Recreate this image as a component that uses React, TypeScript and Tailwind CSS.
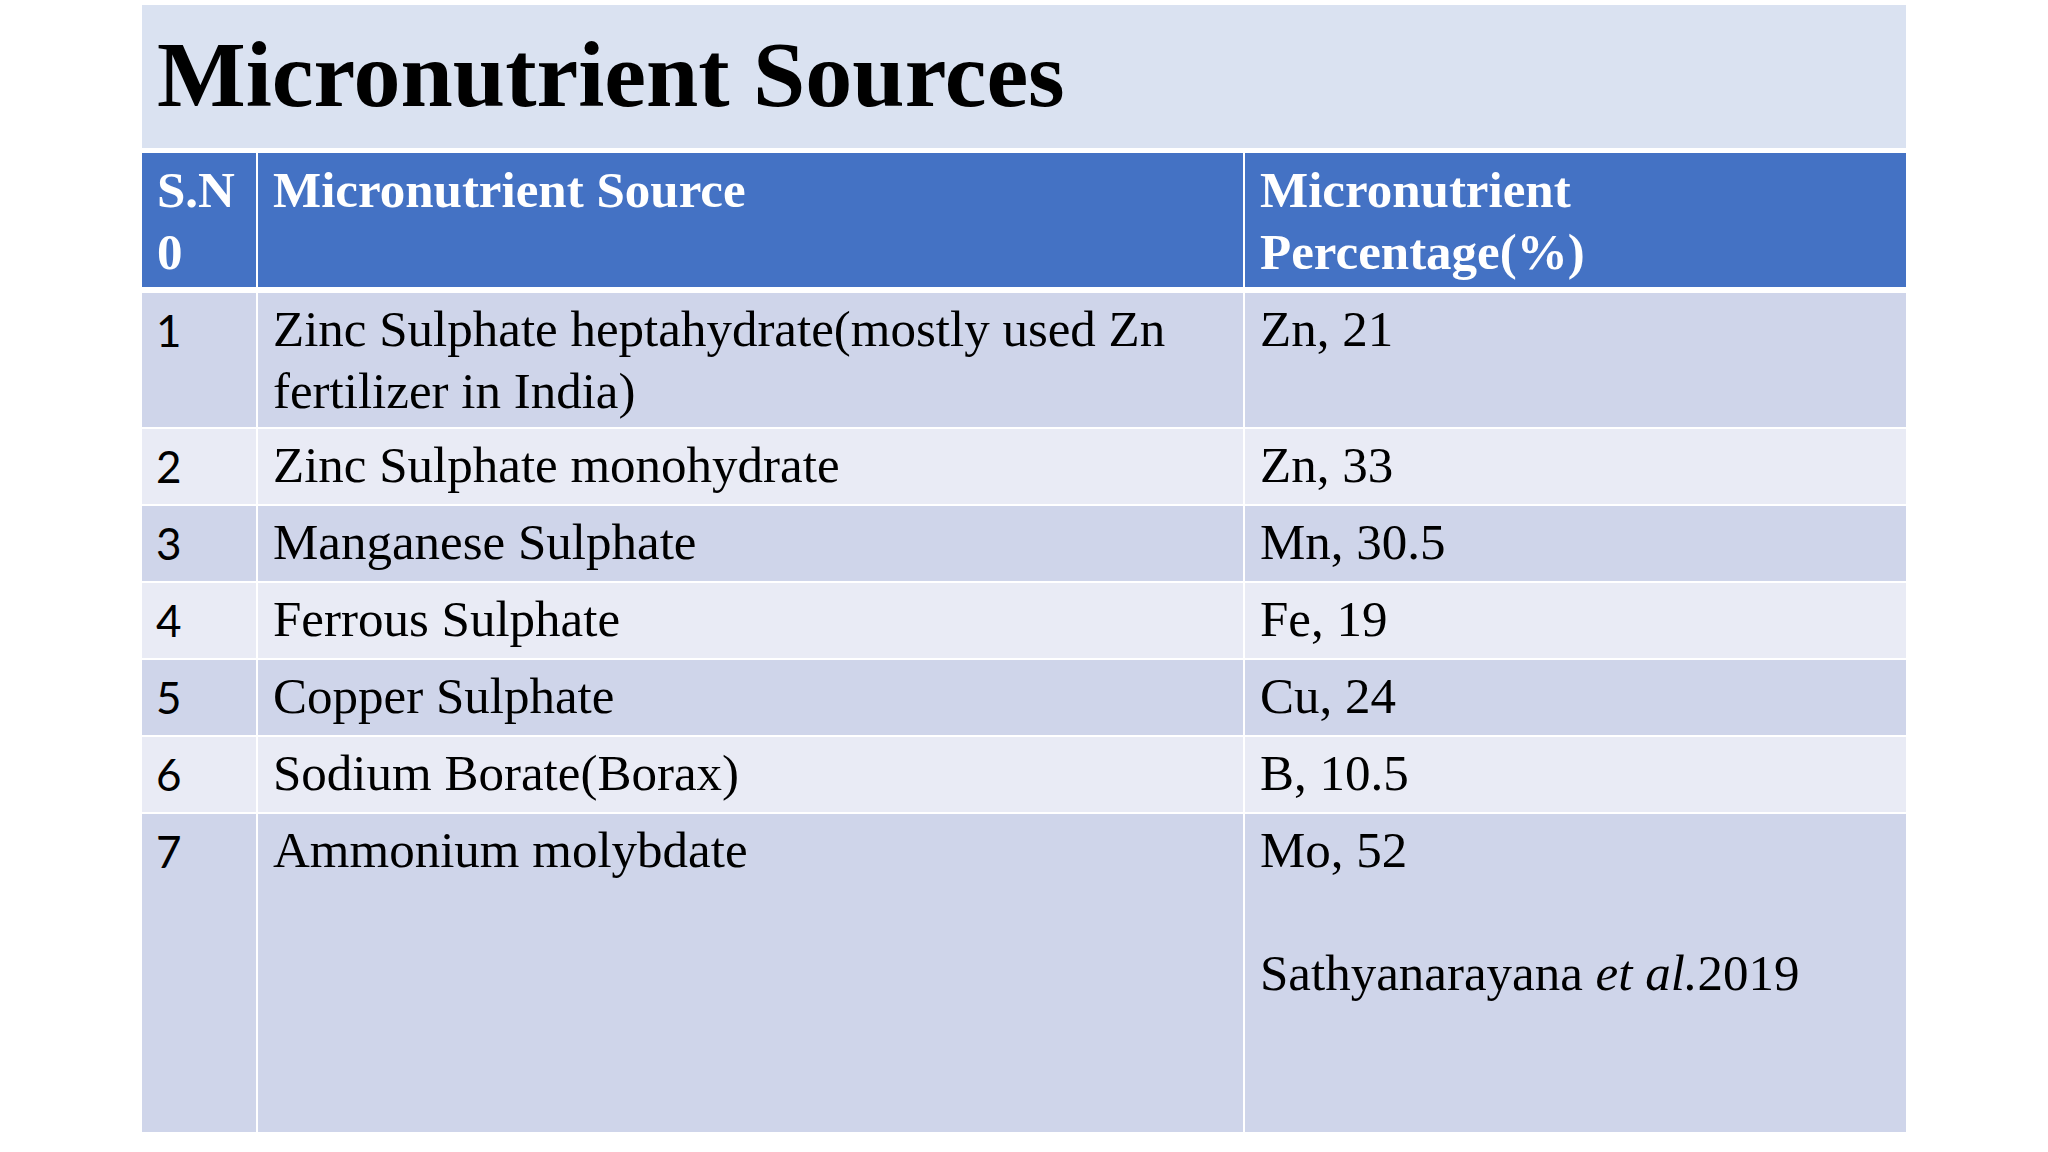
type Row = {
  no: string;
  source: React.ReactNode;
  percent: React.ReactNode;
  h: string;
  dark: boolean;
};

const rows: Row[] = [
  {
    no: "1",
    source: (
      <>
        Zinc Sulphate heptahydrate(mostly used Zn
        <br />
        fertilizer in India)
      </>
    ),
    percent: "Zn, 21",
    h: "h-[134px]",
    dark: true,
  },
  { no: "2", source: "Zinc Sulphate monohydrate", percent: "Zn, 33", h: "h-[75px]", dark: false },
  { no: "3", source: "Manganese Sulphate", percent: "Mn, 30.5", h: "h-[75px]", dark: true },
  { no: "4", source: "Ferrous Sulphate", percent: "Fe, 19", h: "h-[75px]", dark: false },
  { no: "5", source: "Copper Sulphate", percent: "Cu, 24", h: "h-[75px]", dark: true },
  { no: "6", source: "Sodium Borate(Borax)", percent: "B, 10.5", h: "h-[75px]", dark: false },
  {
    no: "7",
    source: "Ammonium molybdate",
    percent: (
      <>
        Mo, 52
        <br />
        <br />
        Sathyanarayana <i>et al.</i>2019
      </>
    ),
    h: "h-[318px]",
    dark: true,
  },
];

const headCell =
  "h-[134px] bg-[#4472c4] pl-[15px] pt-[7px] text-white font-bold text-[51px] leading-[61.5px] font-['Liberation_Serif','Times_New_Roman',serif]";

const App: React.FC = () => {
  return (
    <div className="w-[2048px] h-[1152px] bg-white overflow-hidden">
      <div className="w-[1764px] mx-auto pt-[5px]">
        {/* title band */}
        <div className="h-[143px] bg-[#dae2f1] pl-[15px] pt-[23px]">
          <h1 className="text-[94px] leading-[93px] font-bold text-black font-['Liberation_Serif','Times_New_Roman',serif]">
            Micronutrient Sources
          </h1>
        </div>

        {/* header */}
        <div className="mt-[5px] grid grid-cols-[114px_985px_661px] gap-x-[2px]">
          <div className={headCell}>
            S.N
            <br />0
          </div>
          <div className={headCell}>Micronutrient Source</div>
          <div className={headCell}>
            Micronutrient
            <br />
            Percentage(%)
          </div>
        </div>

        {/* body rows */}
        <div className="mt-[6px] flex flex-col gap-y-[2px]">
          {rows.map((r) => (
            <div key={r.no} className={`grid grid-cols-[114px_985px_661px] gap-x-[2px] ${r.h}`}>
              <div
                className={`${r.dark ? "bg-[#cfd5ea]" : "bg-[#e9ebf5]"} pl-[14px] pt-[7px] text-[44px] leading-[61.5px] text-black font-['Lato','Open_Sans',sans-serif]`}
              >
                {r.no}
              </div>
              <div
                className={`${r.dark ? "bg-[#cfd5ea]" : "bg-[#e9ebf5]"} pl-[15px] pt-[6px] text-[51px] leading-[61.5px] text-black font-['Liberation_Serif','Times_New_Roman',serif]`}
              >
                {r.source}
              </div>
              <div
                className={`${r.dark ? "bg-[#cfd5ea]" : "bg-[#e9ebf5]"} pl-[15px] pt-[6px] text-[51px] leading-[61.5px] text-black font-['Liberation_Serif','Times_New_Roman',serif]`}
              >
                {r.percent}
              </div>
            </div>
          ))}
        </div>
      </div>
    </div>
  );
};

export default App;
